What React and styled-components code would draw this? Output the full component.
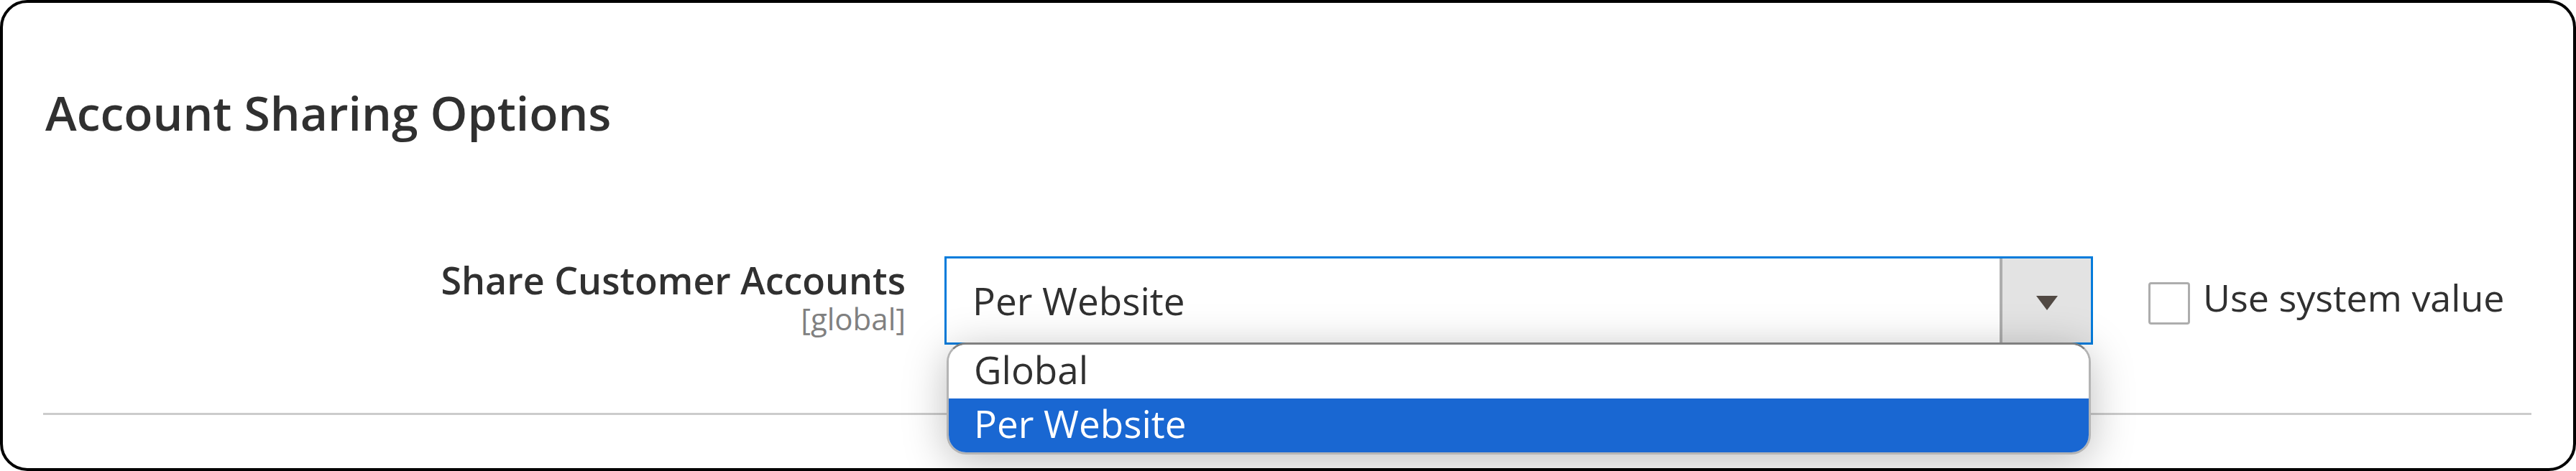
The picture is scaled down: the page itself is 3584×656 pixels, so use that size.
import React from 'react';
import styled, { createGlobalStyle } from 'styled-components';

const Global = createGlobalStyle`
  html, body { margin: 0; padding: 0; background: #fff; }
  body { font-family: "Open Sans", "Noto Sans", sans-serif; }
`;

const Frame = styled.div`
  box-sizing: border-box;
  width: 3584px;
  height: 656px;
  border: 4px solid #000;
  border-radius: 38px;
  background: #fff;
  overflow: hidden;
  padding: 106px 58px 0 59px;
  font-family: "Open Sans", "Noto Sans", sans-serif;
  color: #303030;
`;

const Title = styled.h2`
  margin: 0;
  font-size: 66px;
  font-weight: 600;
  line-height: 92px;
  color: #303030;
`;

const FieldRow = styled.div`
  display: grid;
  grid-template-columns: 1197px 1598px auto;
  column-gap: 54px;
  align-items: start;
  margin-top: 155px;
`;

const LabelCol = styled.div`
  text-align: right;
`;

const LabelText = styled.span`
  display: block;
  font-size: 52px;
  font-weight: 600;
  line-height: 66px;
  color: #303030;
`;

const Scope = styled.span`
  display: block;
  font-size: 42px;
  line-height: 42px;
  color: #808080;
`;

const SelectBox = styled.div`
  position: relative;
  box-sizing: border-box;
  height: 123px;
  display: flex;
  border: 3px solid #007bdb;
  background: #fff;
`;

const SelectValue = styled.div`
  flex: 1;
  padding-left: 36px;
  font-size: 53px;
  line-height: 117px;
  color: #303030;
`;

const ArrowButton = styled.div`
  box-sizing: border-box;
  width: 127px;
  border-left: 4px solid #adadad;
  background: #e3e3e3;
  display: flex;
  align-items: center;
  justify-content: center;
`;

const Triangle = styled.span`
  width: 0;
  height: 0;
  margin-top: 6px;
  border-left: 15px solid transparent;
  border-right: 15px solid transparent;
  border-top: 20px solid #514943;
`;

const Popup = styled.ul`
  position: absolute;
  top: 100%;
  left: 0;
  right: 0;
  z-index: 2;
  margin: 0;
  padding: 0;
  list-style: none;
  box-sizing: border-box;
  background: #fff;
  border: 3px solid #b4b4b4;
  border-top-color: #808080;
  border-radius: 27px;
  overflow: hidden;
  box-shadow: 0 10px 60px rgba(0, 0, 0, 0.26);
`;

const Option = styled.li`
  box-sizing: border-box;
  height: 75px;
  padding: 0 0 5px 35px;
  font-size: 53px;
  line-height: 70px;
  color: ${(p) => (p.$active ? '#fff' : '#303030')};
  background: ${(p) => (p.$active ? '#1967d2' : '#fff')};
`;

const SystemValue = styled.label`
  display: flex;
  align-items: flex-start;
  margin-left: 23px;
`;

const Checkbox = styled.span`
  box-sizing: border-box;
  width: 58px;
  height: 59px;
  margin-top: 36px;
  border: 3px solid #adadad;
  border-radius: 4px;
  background: #fff;
`;

const CheckText = styled.span`
  margin: 23px 0 0 18px;
  font-size: 52px;
  line-height: 68px;
  color: #303030;
  white-space: nowrap;
`;

const Separator = styled.div`
  height: 3px;
  margin: 95px 0 0 -3px;
  background: #cccccc;
`;

export default function App() {
  return (
    <>
      <Global />
      <Frame>
        <Title>Account Sharing Options</Title>
        <FieldRow>
          <LabelCol>
            <LabelText>Share Customer Accounts</LabelText>
            <Scope>[global]</Scope>
          </LabelCol>
          <SelectBox>
            <SelectValue>Per Website</SelectValue>
            <ArrowButton>
              <Triangle />
            </ArrowButton>
            <Popup>
              <Option>Global</Option>
              <Option $active>Per Website</Option>
            </Popup>
          </SelectBox>
          <SystemValue>
            <Checkbox />
            <CheckText>Use system value</CheckText>
          </SystemValue>
        </FieldRow>
        <Separator />
      </Frame>
    </>
  );
}
